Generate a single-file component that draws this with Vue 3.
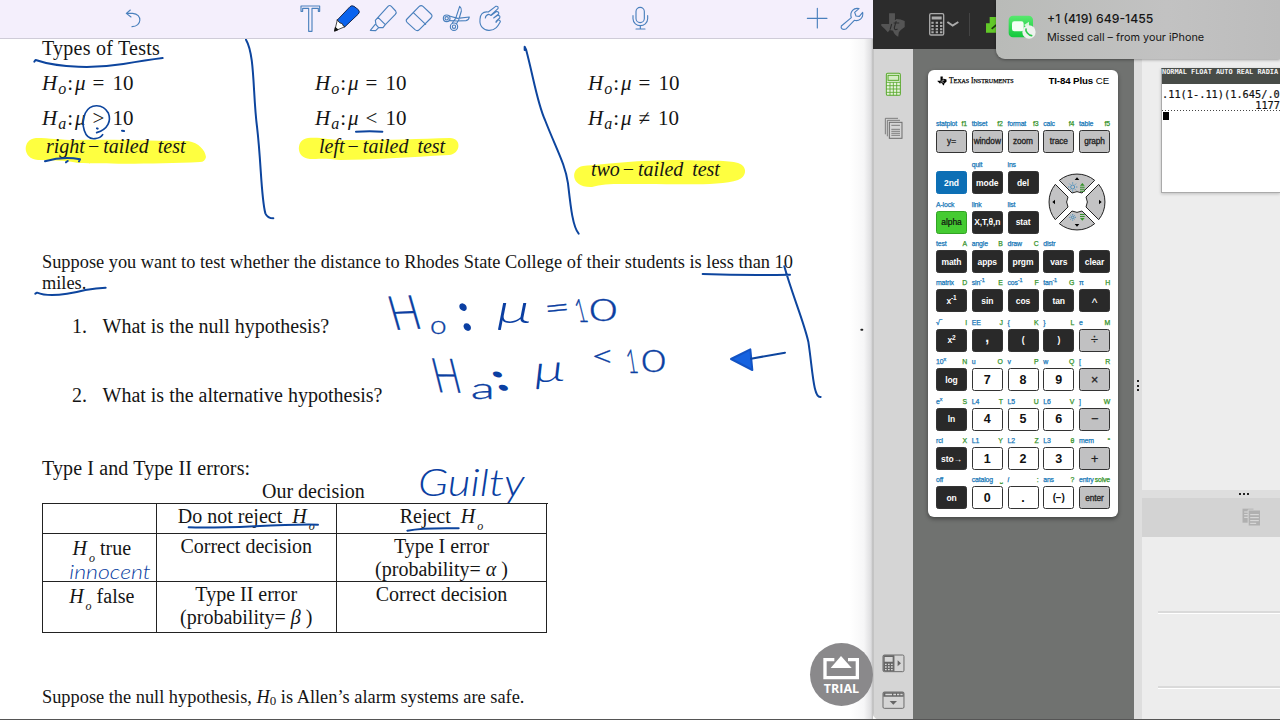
<script setup>
// Key caps and their secondary labels; "|" separates a base from its superscript
const split = (t) => t.split('|')
const keys = [
  ['y=', 'g', 'statplot', 'f1'], ['window', 'g', 'tblset', 'f2'], ['zoom', 'g', 'format', 'f3'], ['trace', 'g', 'calc', 'f4'], ['graph', 'g', 'table', 'f5'],
  ['2nd', 'b', '', ''], ['mode', 'd', 'quit', ''], ['del', 'd', 'ins', ''],
  ['alpha', 'n', 'A-lock', ''], ['X,T,θ,n', 'd', 'link', ''], ['stat', 'd', 'list', ''],
  ['math', 'd', 'test', 'A'], ['apps', 'd', 'angle', 'B'], ['prgm', 'd', 'draw', 'C'], ['vars', 'd', 'distr', ''], ['clear', 'd', '', ''],
  ['x|-1', 'd', 'matrix', 'D'], ['sin', 'd', 'sin|-1', 'E'], ['cos', 'd', 'cos|-1', 'F'], ['tan', 'd', 'tan|-1', 'G'], ['^', 'd up', 'π', 'H'],
  ['x|2', 'd', '√‾', 'I'], [',', 'd comma', 'EE', 'J'], ['(', 'd', '{', 'K'], [')', 'd', '}', 'L'], ['÷', 'g op', 'e', 'M'],
  ['log', 'd', '10|x', 'N'], ['7', 'w', 'u', 'O'], ['8', 'w', 'v', 'P'], ['9', 'w', 'w', 'Q'], ['×', 'g op', '[', 'R'],
  ['ln', 'd', 'e|x', 'S'], ['4', 'w', 'L4', 'T'], ['5', 'w', 'L5', 'U'], ['6', 'w', 'L6', 'V'], ['−', 'g op', ']', 'W'],
  ['sto→', 'd', 'rcl', 'X'], ['1', 'w', 'L1', 'Y'], ['2', 'w', 'L2', 'Z'], ['3', 'w', 'L3', 'θ'], ['+', 'g op', 'mem', '“'],
  ['on', 'd', 'off', ''], ['0', 'w', 'catalog', '⎵'], ['.', 'w', 'i', ':'], ['(−)', 'w neg', 'ans', '?'], ['enter', 'g', 'entry', 'solve'],
].map(([cap, kind, second, alpha]) => ({ cap: split(cap), kind, second: split(second), alpha }))

// Handwritten notes: text, x, baseline, size, width, rotation, backslant, class
const script = [
  ['H', 41, 270, 142, 92, -3, 13, ''], ['o', 150, 283, 76, 50, 0, 0, ''], [':', 246, 267, 150, 34, 0, 12, 'dots'], ['μ', 350, 250, 120, 104, 0, 0, 'mu'],
  ['=', 496, 240, 96, 78, -6, 0, ''], ['1', 594, 245, 96, 34, 0, 14, ''], ['0', 628, 244, 96, 84, 0, 0, ''],
  ['H', 170, 456, 142, 82, 2, 16, ''], ['a', 272, 476, 88, 72, 0, 0, ''], [':', 355, 446, 100, 34, 0, 24, 'dots'], ['μ', 464, 428, 112, 92, -4, 0, 'mu'],
  ['<', 632, 382, 96, 72, 0, 0, ''], ['1', 744, 400, 98, 34, 0, 9, ''], ['0', 784, 396, 92, 74, 0, 0, ''],
].map(([t, x, y, s, w, r, k, c]) => ({ t, x, y, s, w, r, k, c }))
</script>

<template>
  <div class="screen">
    <section class="notes">
      <header class="tools">
        <svg viewBox="357 15 84 84"><path d="M391 30L379 40L393 51M379 40H398C428 42 426 80 396 80" /></svg>
        <svg viewBox="888 15 84 84"><path d="M903 18H959V34H955V25H936V94H926V25H908V34H903Z" /></svg>
        <svg viewBox="999 15 84 84" class="pen"><path class="body" d="M1012 60L1050 20Q1055 15 1062 19L1075 29Q1081 36 1075 42L1035 80Z" /><path class="tip" d="M1012 60L1004 93L1035 80Q1028 79 1027 71Q1018 71 1012 60Z" /><path class="nib" d="M1006 83L1004 93L1013 89Z" /></svg>
        <svg viewBox="1107 15 84 84"><path d="M1134 52L1164 19Q1169 14 1174 19L1187 33Q1191 38 1186 43L1156 74M1134 52L1126 61L1128 74L1136 83L1149 83L1156 74ZM1125 74L1111 91L1127 92L1136 83" /></svg>
        <svg viewBox="1215 15 84 84"><path d="M1221 57L1257 20Q1263 14 1269 19L1293 42Q1299 48 1293 54L1258 89Q1252 95 1245 89L1222 68Q1216 62 1221 57ZM1240 38L1277 73" /></svg>
        <svg viewBox="36 15 84 84"><circle cx="50" cy="55" r="10" /><circle cx="50" cy="55" r="5" /><circle cx="72" cy="80" r="11" /><circle cx="72" cy="80" r="5" /><path d="M58 48L83 55L118 51Q116 61 108 62L82 63L59 62M67 69L77 55L89 19Q96 25 94 33L86 60L79 72" /></svg>
        <svg viewBox="138 15 84 84"><path d="M182 46L204 26Q206 17 197 19L175 36C158 33 150 44 150 58C148 78 160 92 178 91C198 91 205 76 211 65Q210 58 203 61L198 67M184 46L199 35Q208 34 206 42L191 54M194 52L203 46Q212 46 209 54L198 64M166 54Q167 45 176 43L182 46" /></svg>
        <svg viewBox="588 15 84 84"><rect x="618" y="22" width="25" height="46" rx="12.500" /><path d="M609 47V56C610 84 652 84 653 56V47M631 77V87M618 87H645" /></svg>
        <svg viewBox="1119 15 84 84"><path d="M1132 55H1191M1162 25V84" /></svg>
        <svg viewBox="1221 15 84 84"><path d="M1234 78L1264 53C1258 35 1272 22 1287 26L1274 37L1278 48L1288 49L1298 37C1301 55 1286 65 1273 61L1249 86C1239 91 1231 86 1234 78Z" /></svg>
      </header>

      <article class="doc">
        <svg class="marker" viewBox="0 0 873 720">
          <path d="M36 138C50 138 60 140 76 140C120 139 160 141 188 141C199 143 205 150 206 157Q205 162 200 162C160 164 110 164 78 163C65 160 48 160 38 160C22 159 22 139 36 138Z" />
          <path d="M308 138C324 137 330 141 350 140C390 140 420 139 450 138C462 138 461 154 449 155C410 157 370 160 340 160C325 158 318 159 310 159C295 158 296 139 308 138Z" />
          <path d="M583 166C605 164 640 160 680 160C710 161 728 160 738 163C748 166 747 177 738 180C720 186 680 184 645 184C620 184 604 183 592 187C570 188 570 168 583 166Z" />
        </svg>
        <p class="title">Types of Tests</p>
        <div class="cols">
          <div><p class="eq"><i>H<sub>o</sub></i><b>:</b><i>μ</i><em>=</em>10</p><p class="eq"><i>H<sub>a</sub></i><b>:</b><i>μ</i><em>&gt;</em>10</p><p class="kind">right<s>−</s>tailed<u></u>test</p></div>
          <div><p class="eq"><i>H<sub>o</sub></i><b>:</b><i>μ</i><em>=</em>10</p><p class="eq"><i>H<sub>a</sub></i><b>:</b><i>μ</i><em>&lt;</em>10</p><p class="kind">left<s>−</s>tailed<u></u>test</p></div>
          <div><p class="eq"><i>H<sub>o</sub></i><b>:</b><i>μ</i><em>=</em>10</p><p class="eq"><i>H<sub>a</sub></i><b>:</b><i>μ</i><em>≠</em>10</p><p class="kind low">two<s>−</s>tailed<u></u>test</p></div>
        </div>
        <p class="para">Suppose you want to test whether the distance to Rhodes State College of their students is less than 10<br>miles.</p>
        <p class="q q1"><span>1.</span>What is the null hypothesis?</p>
        <p class="q q2"><span>2.</span>What is the alternative hypothesis?</p>
        <p class="types">Type I and Type II errors:</p>
        <p class="our">Our decision</p>
        <div class="table">
          <div></div><div>Do not reject&nbsp; <i>H</i><sub>o</sub></div><div>Reject&nbsp; <i>H</i><sub>o</sub></div>
          <div class="side"><i>H</i><sub>o</sub> true</div><div>Correct decision</div><div>Type I error<br>(probability= <i>α</i> )</div>
          <div class="side"><i>H</i><sub>o</sub> false</div><div>Type II error<br>(probability= <i>β</i> )</div><div>Correct decision</div>
        </div>
        <p class="last">Suppose the null hypothesis, <i>H</i><small>0</small> is Allen’s alarm systems are safe.</p>
      </article>

      <svg class="ink" viewBox="0 0 873 720">
        <g transform="scale(.33333)">
          <path d="M103 185L107 180C180 205 290 205 370 192Q440 180 488 174" />
          <path d="M738 119C765 165 758 280 771 380C784 490 783 590 796 640Q803 655 820 655" />
          <path class="thin" d="M290 398C325 388 334 362 325 339C308 309 270 311 256 339C241 373 253 420 285 416Q302 414 308 404" />
          <path d="M366 392L372 393M291 385L293 386M1068 395Q1110 392 1147 395M135 484Q190 468 240 478L237 484M198 487L203 483" />
          <path d="M1574 150L1574 140L1578 148C1600 230 1612 310 1635 360C1670 450 1695 490 1704 550C1712 620 1718 680 1736 701" />
        </g>
        <g transform="translate(0 240) scale(.33333)"><path d="M106 161L111 158C145 172 205 163 256 150Q290 144 317 143" /></g>
        <g transform="translate(380 240) scale(.33333)">
          <path d="M968 102Q1100 107 1230 104M1213 79C1235 160 1270 240 1285 305C1298 390 1300 475 1322 471" />
          <path class="solid" d="M1053 357L1111 328L1117 390Z" /><path d="M1113 356L1215 338" />
          <path class="dot" d="M1444 269L1447 269" />
          <text v-for="(g, n) in script" :key="n" :class="g.c" :transform="`translate(${g.x} ${g.y}) rotate(${g.r}) skewX(${g.k})`" :font-size="g.s" :textLength="g.w" lengthAdjust="spacingAndGlyphs">{{ g.t }}</text>
        </g>
        <g transform="translate(380 460) scale(.33333)">
          <text class="cursive" x="114" y="107" font-size="110" textLength="320" lengthAdjust="spacingAndGlyphs">Guilty</text>
          <path d="M82 212Q130 203 236 205" />
        </g>
        <g transform="translate(0 460) scale(.33333)">
          <text class="cursive" x="208" y="356" font-size="56" textLength="244" lengthAdjust="spacingAndGlyphs">innocent</text>
          <path d="M566 202C690 207 820 191 954 194" />
        </g>
      </svg>

      <div class="trial">
        <svg viewBox="1325 580 122 86"><path d="M1365 600H1337V654H1434V600H1406" /><path class="solid" d="M1354 625L1385 589L1417 625Z" /></svg>
        TRIAL
      </div>
    </section>

    <section class="emu">
      <header class="bar">
        <svg class="texas" viewBox="0 0 80 80"><path d="M28 4H46V22Q60 20 76 28V46Q64 54 58 62L56 76Q45 72 40 58L30 55L24 62Q16 52 4 42V37H28Z" /><path class="cut" d="M51 15L47 24M42 34H59M50 28L44 48Q44 58 54 52M36 37L31 54" /></svg>
        <svg class="pick" viewBox="174 38 98 76"><rect x="179" y="43" width="42" height="64" rx="4" /><path d="M185 56H215" stroke-width="9" /><path class="pad" d="M184 70H191M197 70H204M210 70H217M184 80H191M197 80H204M210 80H217M184 90H191M197 90H204M210 90H217M184 99H191M197 99H204M210 99H217" /><path d="M232 68L248 79L265 68" stroke-width="6" /></svg>
        <i class="rule"></i>
        <svg class="send" viewBox="342 48 42 52"><path d="M356 51H384V80H375V98H345V70H356Z" /><path class="arrow" d="M362 87L384 68" /></svg>
      </header>

      <div class="body">
        <nav class="rail">
          <svg class="calc" viewBox="42 216 50 74"><rect x="46" y="220" width="42" height="66" rx="4" /><rect class="screen-area" x="51" y="226" width="32" height="15" /><path d="M46 247H88M46 257H88M46 267H88M46 277H88M57 247V286M67 247V286M77 247V286" /></svg>
          <svg class="pages" viewBox="0 0 60 70"><path d="M4 52V4H42M10 58V10H48" /><rect x="16" y="16" width="38" height="48" /><path d="M22 25H48M22 37H48M22 43H48M22 49H48M22 55H48" /></svg>
          <svg class="dock" viewBox="34 554 70 56"><rect x="37" y="557" width="63" height="50" rx="4" /><path class="fill" d="M38 558H70V606H38Z" /><path class="light" d="M42 563H66V577H42ZM43 583H48V587H43ZM52 583H57V587H52ZM61 583H66V587H61ZM43 591H48V595H43ZM52 591H57V595H52ZM61 591H66V595H61ZM43 599H48V603H43ZM52 599H57V603H52ZM61 599H66V603H61Z" /><path class="fill" d="M81 573L91 582L81 591Z" /><path d="M70 558V606" /></svg>
          <svg class="dock2" viewBox="34 664 70 56"><rect x="37" y="667" width="63" height="49" rx="4" /><path class="fill" d="M38 668H99V681H38Z" /><path class="light" d="M44 672H64V677H44ZM68 672H76V677H68ZM79 672H86V677H79ZM89 672H96V677H89Z" /><path class="fill" d="M57 694H79L68 705Z" /></svg>
        </nav>

        <main class="stage">
          <div class="handheld">
            <div class="brand">
              <svg viewBox="0 0 80 80"><path d="M28 4H46V22Q60 20 76 28V46Q64 54 58 62L56 76Q45 72 40 58L30 55L24 62Q16 52 4 42V37H28Z" /><path class="cut" d="M51 15L47 24M42 34H59M50 28L44 48Q44 58 54 52M36 37L31 54" /></svg>
              <span class="ti">T<small>EXAS</small> I<small>NSTRUMENTS</small></span>
              <span class="model"><b>TI-84 Plus</b> CE</span>
            </div>
            <div class="keypad">
              <div v-for="(k, n) in keys" :key="n" class="cell">
                <div class="lab"><span :class="{ it: k.second[0] === 'i' }">{{ k.second[0] }}<sup v-if="k.second[1]">{{ k.second[1] }}</sup></span><span class="al">{{ k.alpha }}</span></div>
                <div class="key" :class="k.kind">{{ k.cap[0] }}<sup v-if="k.cap[1]">{{ k.cap[1] }}</sup></div>
              </div>
              <svg class="dpad" viewBox="-87 -87 174 174">
                <path v-for="a in [0, 90, 180, 270]" :key="a" class="seg" :transform="`rotate(${a})`" d="M-53 -65A84 84 0 0 1 53 -65L15 -27A31 31 0 0 0 -15 -27Z" />
                <path d="M-7 -66L0 -74L7 -66ZM-7 66L0 74L7 66ZM-66 -7L-74 0L-66 7ZM66 -7L74 0L66 7Z" />
                <g class="sun"><circle cx="-13" cy="-45" r="6" /><path d="M-13 -59V-55M-13 -35V-31M-27 -45H-23M-3 -45H1M-23 -55L-20 -52M-3 -55L-6 -52M-23 -35L-20 -38M-3 -35L-6 -38" /><circle cx="-13" cy="46" r="4" /><path d="M-13 36V39M-13 53V56M-23 46H-20M-6 46H-3M-20 39L-18 41M-6 39L-8 41M-20 53L-18 51M-6 53L-8 51" /></g>
                <path class="lev" d="M9 -49L16 -57L23 -49ZM9 -46H23V-43H9ZM9 -40H23V-37H9ZM9 -34H23V-31H9ZM9 36H23V39H9ZM9 42H23V45H9ZM9 48H23L16 56Z" />
              </svg>
            </div>
          </div>
        </main>

        <div class="split"><i></i><i></i><i></i></div>

        <aside class="side-pane">
          <div class="lcd-wrap">
            <div class="lcd">
              <div class="status">NORMAL FLOAT AUTO REAL RADIA</div>
              <div class="line">.11(1-.11)(1.645/.0</div>
              <div class="line res">1177</div>
              <div class="caret"></div>
            </div>
          </div>
          <div class="grip"><i></i><i></i><i></i></div>
          <div class="shelf"><svg viewBox="1118 114 56 54"><path d="M1119 116H1152V158H1119Z" /><path class="l" d="M1124 126H1147M1124 134H1147M1124 142H1147" /><path class="p" d="M1136 120H1173V168H1136Z" /><path class="l" d="M1142 134H1168M1142 143H1168M1142 152H1168M1142 160H1160" /></svg></div>
          <div class="row"></div><div class="row"></div>
        </aside>
      </div>
    </section>

    <div class="toast">
      <svg viewBox="412 46 84 74"><defs><linearGradient id="g" x1="0" y1="0" x2="0" y2="1"><stop offset="0" stop-color="#58e96e" /><stop offset="1" stop-color="#12c83c" /></linearGradient></defs><rect x="414" y="48" width="73" height="65" rx="13" fill="url(#g)" /><rect x="424" y="65" width="35" height="30" rx="7" fill="#f4fff4" /><path d="M460 76L475 66V88Z" fill="#d5f5d8" /><circle cx="475" cy="97" r="20" fill="#eef2ee" /><path d="M466 88Q464 93 470 100T483 108" fill="none" stroke="#2bc84a" stroke-width="5" stroke-linecap="round" /></svg>
      <div><strong>+1 (419) 649-1455</strong><span>Missed call – from your iPhone</span></div>
    </div>
    <div class="edge"></div>
  </div>
</template>

<style>
body { margin: 0; overflow: hidden; }
</style>

<style scoped>
* { box-sizing: border-box; }
.screen { position: relative; display: flex; width: 1280px; height: 720px; overflow: hidden; background: #fff; }
p { margin: 0; }

.notes { position: relative; width: 873px; height: 720px; overflow: hidden; background: linear-gradient(90deg, #fff 850px, #f6f6f7 864px, #dedee0 871px, #bbb 873px); }
.tools { position: relative; z-index: 2; height: 39px; background: #f4effc; border-bottom: 1px solid #cfccd8; padding: 5px 0 0 119px; display: grid; grid-template-columns: 177px 37px 36px 36px 37px 34px 150px 177px 34px 30px; }
.tools svg { width: 28px; height: 28px; fill: none; stroke: #4a80bd; stroke-width: 3.400; stroke-linejoin: round; stroke-linecap: round; overflow: visible; }
.tools .pen .body { display: inline; height: auto; fill: #0a63ee; stroke: #16264e; stroke-width: 3; }
.pen .tip { fill: #fff; stroke: #222; stroke-width: 2.500; }
.pen .nib { fill: #111; stroke: #111; }

.doc { position: relative; height: 681px; padding-left: 42px; font: 20px/24px "Liberation Serif", serif; color: #151515; white-space: nowrap; }
.doc > p, .cols, .table { position: relative; }
.marker { position: absolute; left: 0; top: -39px; width: 873px; height: 720px; fill: #feff40; }
.title { height: 24px; line-height: 19px; letter-spacing: .25px; }
.cols { display: grid; grid-template-columns: 273px 273px 240px; height: 187px; padding-top: 8px; }
.eq { height: 35px; line-height: 25px; font-size: 21px; }
.eq sub { font-size: 16px; line-height: 0; vertical-align: -4px; margin-left: 1px; }
.eq b { font-weight: 400; margin: 0 2px 0 1px; }
.eq em { font-style: normal; margin: 0 8px 0 7px; }
.kind { font-style: italic; padding-left: 4px; margin-top: -7px; }
.kind s { text-decoration: none; font-style: normal; margin: 0 4px 0 3px; }
.kind u { display: inline-block; width: 9px; }
.low { margin-top: 16px; padding-left: 3px; letter-spacing: -.05px; }
.para { height: 42px; font-size: 18.350px; line-height: 21px; margin-top: 2px; }
.q { display: flex; padding-left: 30px; }
.q span { width: 30.500px; }
.q1 { margin-top: 20px; }
.q2 { margin-top: 45px; }
.types { margin-top: 49px; letter-spacing: .12px; }
.our { margin-top: -1px; padding-left: 220px; }
.table { width: 505.500px; height: 130px; display: grid; grid-template-columns: 113.500px 180.500px 210px; grid-template-rows: 30px 48px 50.500px; border: solid #222; border-width: 1.500px 0 0 1.500px; text-align: center; line-height: 23px; }
.table > div { border: solid #222; border-width: 0 1.500px 1.500px 0; padding-top: 1px; }
.table sub { font-size: 12px; font-style: italic; line-height: 0; vertical-align: -7px; margin-left: 2px; }
.table .side { padding-top: 3px; padding-left: 5px; }
.last { margin-top: 52px; font-size: 18.350px; }
.last small { font-size: 13px; vertical-align: -2px; }

.ink { position: absolute; left: 0; top: 0; z-index: 1; width: 873px; height: 720px; fill: none; stroke: #0d459e; stroke-width: 6; stroke-linecap: round; stroke-linejoin: round; }
.ink text { fill: #0b3fa2; stroke: #0b3fa2; stroke-width: 1; font-family: Lato, sans-serif; font-weight: 300; }
.ink .mu { font-style: italic; stroke-width: 0; }
.ink .dots { stroke-width: 9; }
.ink .cursive { font-style: italic; stroke-width: 0; }
.ink .thin { stroke-width: 5; }
.ink .solid { fill: #1562e0; stroke: #1253c4; }
.ink .dot { stroke: #222; }

.trial { position: absolute; z-index: 3; left: 810px; top: 643px; width: 63px; height: 63px; border-radius: 50%; background: #8a898b; display: flex; flex-direction: column; align-items: center; padding-top: 10px; color: #fff; font: 700 12.500px/15px "Open Sans", sans-serif; }
.trial svg { width: 40.700px; height: 28.700px; fill: none; stroke: #fff; stroke-width: 10; margin-bottom: -1px; }
.trial .solid { fill: #fff; stroke: none; }

.emu { width: 407px; height: 720px; border-bottom-left-radius: 7px; overflow: hidden; }
.bar { height: 49px; background: #2c2c2c; display: flex; align-items: center; }
.texas { width: 26px; height: 26px; margin-left: 7px; fill: #555; }
.cut { fill: none; stroke: #2c2c2c; stroke-width: 3.500; }
.pick { width: 32.700px; height: 25.300px; margin-left: 22px; fill: none; stroke: #aaa; stroke-width: 4; }
.pick .pad { stroke-width: 6; }
.rule { width: 1px; height: 23px; margin-left: 8px; background: #444; }
.send { width: 14px; height: 17.300px; margin-left: 15px; fill: #62c928; }
.send .arrow { stroke: #1d3a10; stroke-width: 5; }

.body { display: flex; height: 671px; }
.rail { width: 40px; background: #d5d5d5; display: flex; flex-direction: column; align-items: center; padding-top: 23px; border-left: 1px solid #c4c4c4; }
.rail svg { flex: none; fill: none; stroke: #6b6b6b; stroke-width: 3; }
.rail .calc { width: 16.700px; height: 24.700px; stroke: #57a82b; fill: #e6f3dc; }
.rail .calc path { fill: none; stroke-width: 2.500; }
.rail .screen-area { fill: #d4ecc4; }
.rail .pages { width: 20px; height: 23.300px; margin-top: 20px; }
.rail .pages path { stroke-width: 2.500; }
.rail .dock { width: 23.300px; height: 18.700px; margin-top: 514px; }
.rail .dock2 { width: 23.300px; height: 18.700px; margin-top: 18px; }
.rail .fill { fill: #666; stroke: none; }
.rail .light { fill: #d8d8d8; stroke: none; }

.stage { width: 221px; background: #707270; padding: 20.500px 0 0 15px; }
.handheld { width: 190px; height: 447px; background: #fff; border-radius: 6px; box-shadow: 0 2px 4px rgba(0, 0, 0, .4); font-family: "Liberation Sans", sans-serif; }
.brand { height: 44px; display: flex; align-items: flex-start; padding: 6px 9px 0; white-space: nowrap; }
.brand svg { width: 10px; height: 10px; }
.brand .cut { stroke: #fff; }
.ti { margin-left: 2px; font: 7.400px/10px "Liberation Serif", serif; -webkit-text-stroke: .25px #111; }
.ti small { font-size: 6px; }
.model { margin-left: auto; font-size: 9.700px; line-height: 10px; letter-spacing: -.1px; }
.keypad { display: grid; grid-template-columns: repeat(5, 31px); column-gap: 4.750px; grid-template-rows: 39.400px 41.400px repeat(8, 39.400px); padding-left: 8px; align-items: end; }
.cell:nth-child(9) { grid-column: 1; }
.lab { height: 13px; display: flex; justify-content: space-between; align-items: center; white-space: nowrap; font-size: 6.900px; line-height: 9px; color: #1878b8; letter-spacing: -.15px; -webkit-text-stroke: .25px; }
.lab .al { color: #35932a; }
.lab sup { font-size: 5.500px; line-height: 0; vertical-align: 3px; }
.it { font-style: italic; }
.key { height: 23px; border: 1px solid #333; border-radius: 2.500px; display: flex; align-items: center; justify-content: center; font-size: 8.500px; font-weight: 700; white-space: nowrap; letter-spacing: -.1px; }
.key sup { font-size: 6.500px; line-height: 0; margin-bottom: 5px; }
.g { background: #c1c1c2; color: #222; font-weight: 400; font-size: 8.300px; -webkit-text-stroke: .3px; }
.d { background: #292929; color: #fff; }
.b { background: #0d6fb5; color: #fff; border-color: #0d6fb5; }
.n { background: #45cb32; color: #111; border-color: #32a325; font-weight: 400; -webkit-text-stroke: .2px; }
.w { background: #fff; color: #111; font-size: 12.500px; }
.op { font-size: 12.500px; }
.neg { font-size: 10px; }
.up { font-size: 12px; font-weight: 400; padding-top: 4px; }
.comma { font-size: 14px; padding-bottom: 6px; }
.dpad { grid-column: 4 / 6; grid-row: 2 / 4; width: 58px; height: 58px; justify-self: center; align-self: start; margin-top: 20.500px; }
.seg { fill: #c3c3c4; stroke: #222; stroke-width: 3; stroke-linejoin: round; }
.sun { fill: none; stroke: #1878b8; stroke-width: 2; }
.lev { fill: #35932a; }

.split { width: 8px; background: #dedede; display: flex; flex-direction: column; align-items: center; gap: 2.500px; padding-top: 331px; }
.split i, .grip i { width: 2px; height: 2px; background: #222; flex: none; }
.side-pane { width: 138px; background: #ededed; }
.lcd-wrap { height: 441px; padding: 19px 0 0 19px; }
.lcd { width: 119px; height: 125px; background: #fff; border: 1px solid #aaa; border-right: 0; border-top-color: #484c48; box-shadow: 0 1px 3px rgba(0, 0, 0, .2); font: 10.300px/11px "DejaVu Sans Mono", monospace; color: #111; white-space: nowrap; }
.status { height: 15px; background: #484c48; color: #f4f4f4; font-size: 6.900px; font-weight: 700; line-height: 7px; margin-bottom: 4.500px; }
.line { -webkit-text-stroke: .2px; }
.res { text-align: right; background: repeating-linear-gradient(90deg, #444 0 1px, transparent 1px 3px) 0 100% / 100% 1px no-repeat; }
.caret { width: 6px; height: 8px; margin: 1px 0 0 1px; background: #000; }
.grip { height: 8px; background: #dedede; display: flex; gap: 2px; padding: 3px 0 0 97px; }
.shelf { height: 39px; background: #d3d3d3; padding: 10px 0 0 100px; }
.shelf svg { width: 19px; height: 18px; }
.shelf path { fill: #b0b0b0; }
.shelf .p { stroke: #d3d3d3; stroke-width: 3; }
.shelf .l { stroke: #dedede; stroke-width: 3; fill: none; }
.row { height: 75.500px; margin-left: 16px; border-bottom: 2px solid #dadada; box-shadow: 0 1px 0 #fff; }

.toast { position: absolute; left: 996px; top: 0; z-index: 5; width: 284px; height: 59px; background: linear-gradient(90deg, #b9bbb8, #c2c2c2 60%, #bcbcbc); border-bottom-left-radius: 9px; display: flex; padding: 8px 0 0 12px; box-shadow: 0 1px 3px rgba(0, 0, 0, .35); font: 10.850px/18px Inter, sans-serif; color: #161616; }
.toast svg { width: 28px; height: 24.700px; margin-top: 7px; }
.toast div { display: flex; flex-direction: column; margin-left: 11px; padding-top: 2px; }
.toast strong { font-weight: 500; font-size: 12.200px; }
.edge { position: absolute; left: 0; bottom: 0; width: 1280px; height: 1px; z-index: 6; background: #555; }
</style>
